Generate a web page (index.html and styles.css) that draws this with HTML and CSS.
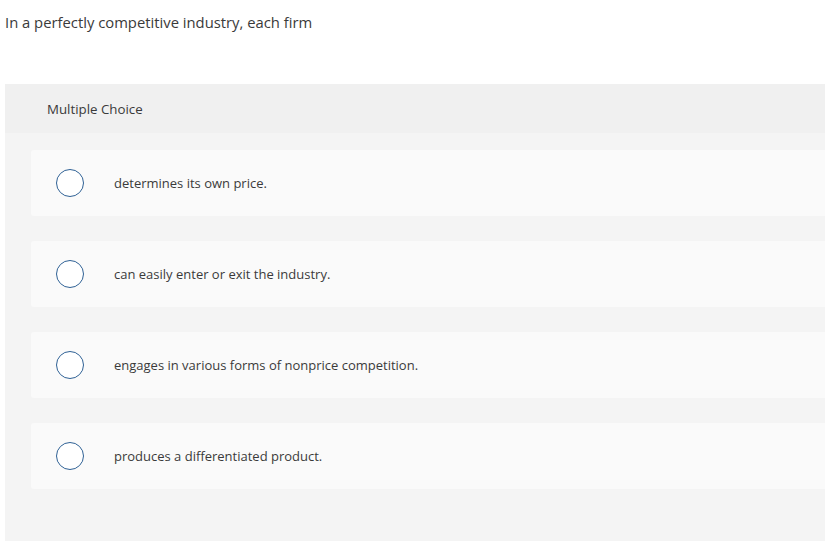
FILE: index.html
```html
<!DOCTYPE html>
<html>
<head>
<meta charset="utf-8">
<link rel="stylesheet" href="styles.css">
</head>
<body>
<p class="question">In a perfectly competitive industry, each firm</p>
<section class="panel">
  <div class="panel-header">Multiple Choice</div>
  <div class="options">
    <label class="option"><span class="radio"></span><span class="option-text">determines its own price.</span></label>
    <label class="option"><span class="radio"></span><span class="option-text">can easily enter or exit the industry.</span></label>
    <label class="option"><span class="radio"></span><span class="option-text">engages in various forms of nonprice competition.</span></label>
    <label class="option"><span class="radio"></span><span class="option-text">produces a differentiated product.</span></label>
  </div>
</section>
</body>
</html>
```

FILE: styles.css
```css
html, body {
  margin: 0;
  padding: 0;
  background: #ffffff;
}
body {
  font-family: "Open Sans", "Liberation Sans", sans-serif;
  color: #333333;
}
.question {
  margin: 0;
  padding: 12px 0 0 5px;
  height: 84px;
  box-sizing: border-box;
  font-size: 14.8px;
  line-height: 20px;
  color: #3a3a3a;
}
.panel {
  margin-left: 5px;
  background: #f4f4f4;
  padding-bottom: 52px;
}
.panel-header {
  height: 49px;
  background: #f0f0f0;
  padding-left: 42px;
  display: flex;
  align-items: center;
  font-size: 13.3px;
  color: #3a3a3a;
}
.options {
  padding: 17px 0 0 26px;
  display: flex;
  flex-direction: column;
  gap: 25px;
}
.option {
  height: 66px;
  background: #fafafa;
  border-radius: 3px 0 0 3px;
  display: flex;
  align-items: center;
  padding-left: 25px;
}
.radio {
  width: 28px;
  height: 28px;
  box-sizing: border-box;
  border: 1.5px solid #2f6195;
  border-radius: 50%;
  background: #ffffff;
  flex: none;
}
.option-text {
  margin-left: 30px;
  font-size: 13px;
  color: #3a3a3a;
}
```
